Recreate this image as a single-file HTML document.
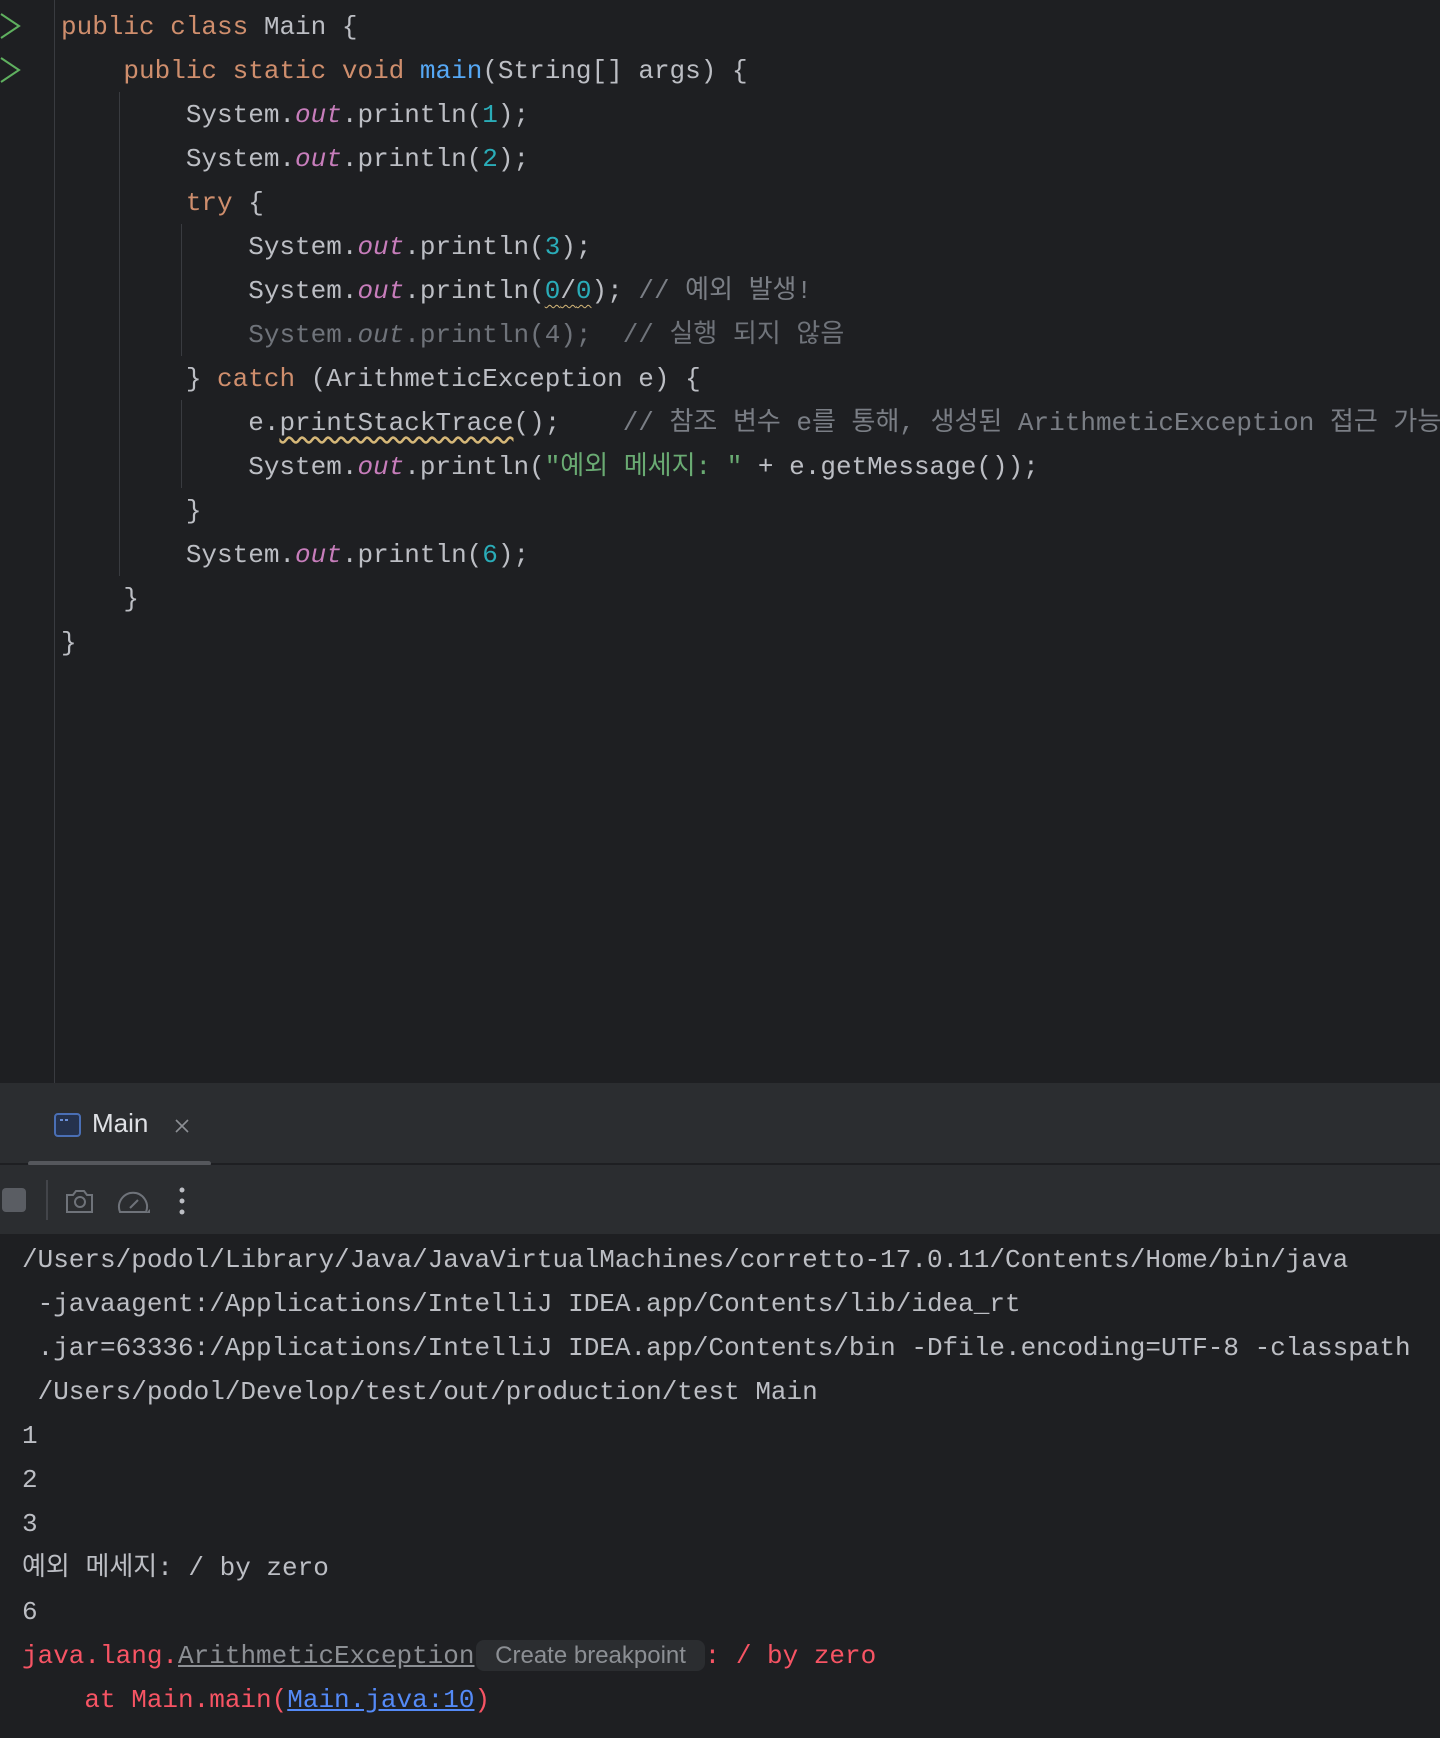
<!DOCTYPE html>
<html><head><meta charset="utf-8"><style>
html,body{margin:0;padding:0;}
body{width:1440px;height:1738px;background:#1e1f22;position:relative;overflow:hidden;font-family:"Liberation Mono","Noto Sans CJK KR",monospace;font-size:26px;color:#bcbec4;}
.code{position:absolute;left:61px;top:5px;white-space:pre;line-height:44px;}
.k{color:#cf8e6d}.f{color:#56a8f5}.o{color:#c77dbb;font-style:italic}.n{color:#2aacb8}.c{color:#7a7e85}.s{color:#6aab73}.dim{color:#6f737a}
.wav{text-decoration:underline wavy #d5b778;text-underline-offset:6px;text-decoration-thickness:1px}
.gut{position:absolute;left:54px;top:0;width:1px;height:1083px;background:#393b40}
.ig{position:absolute;width:1px;background:#393b40}
.tabs{position:absolute;left:0;top:1083px;width:1440px;height:80px;background:#2b2d30;border-bottom:2px solid #1e1f22}
.tb{position:absolute;left:0;top:1165px;width:1440px;height:69px;background:#2b2d30}
.con{position:absolute;left:22px;top:1238px;white-space:pre;line-height:44px;}
.r{color:#f75464}.lnk{color:#548af7;text-decoration:underline}
</style></head><body>
<div class="gut"></div>
<div class="ig" style="left:119px;top:92px;height:484px"></div>
<div class="ig" style="left:181px;top:224px;height:132px"></div>
<div class="ig" style="left:181px;top:400px;height:88px"></div>
<svg style="position:absolute;left:0;top:12px" width="22" height="80"><path d="M1 2 L19 14 L1 26" fill="none" stroke="#5fb05f" stroke-width="2"/><path d="M1 46 L19 58 L1 70" fill="none" stroke="#5fb05f" stroke-width="2"/></svg>
<div class="code"><span class="k">public class</span> Main {
    <span class="k">public static void</span> <span class="f">main</span>(String[] args) {
        System.<span class="o">out</span>.println(<span class="n">1</span>);
        System.<span class="o">out</span>.println(<span class="n">2</span>);
        <span class="k">try</span> {
            System.<span class="o">out</span>.println(<span class="n">3</span>);
            System.<span class="o">out</span>.println(<span class="wav"><span class="n">0</span>/<span class="n">0</span></span>); <span class="c">// 예외 발생!</span>
            <span class="dim">System.<i>out</i>.println(4);  // 실행 되지 않음</span>
        } <span class="k">catch</span> (ArithmeticException e) {
            e.<span style="text-decoration:underline wavy #d5b778;text-underline-offset:6px">printStackTrace</span>();    <span class="c">// 참조 변수 e를 통해, 생성된 ArithmeticException 접근 가능</span>
            System.<span class="o">out</span>.println(<span class="s">"예외 메세지: "</span> + e.getMessage());
        }
        System.<span class="o">out</span>.println(<span class="n">6</span>);
    }
}</div>
<div class="tabs">
<svg style="position:absolute;left:54px;top:30px" width="28" height="26"><rect x="1" y="1" width="25" height="22" rx="3" fill="#25324d" stroke="#4a6fb5" stroke-width="2"/><rect x="6" y="6" width="3" height="2" fill="#6b8fd6"/><rect x="11" y="6" width="3" height="2" fill="#6b8fd6"/></svg>
<div style="position:absolute;left:92px;top:25px;font-family:'Liberation Sans',sans-serif;font-size:26px;color:#dfe1e5">Main</div>
<svg style="position:absolute;left:174px;top:35px" width="16" height="16"><path d="M2 2L14 14M14 2L2 14" stroke="#8c8f94" stroke-width="1.6"/></svg>
<div style="position:absolute;left:28px;top:78px;width:183px;height:5px;border-radius:3px;background:#55575c"></div>
</div>
<div class="tb">
<div style="position:absolute;left:2px;top:23px;width:24px;height:24px;border-radius:4px;background:#5a5d63"></div>
<div style="position:absolute;left:46px;top:15px;width:2px;height:40px;background:#43454a"></div>
<svg style="position:absolute;left:64px;top:20px" width="32" height="32" fill="none" stroke="#6f737a" stroke-width="2"><path d="M3 10h6l3-4h8l3 4h5v17H3z"/><circle cx="16" cy="17" r="5"/></svg>
<svg style="position:absolute;left:116px;top:20px" width="36" height="34" fill="none" stroke="#6f737a" stroke-width="2"><path d="M4 27a14 14 0 1 1 26 0z"/><path d="M14 23l8-8"/><path d="M30 28l4-4v4z" fill="#6f737a" stroke="none"/></svg>
<svg style="position:absolute;left:178px;top:21px" width="8" height="30" fill="#bcbec4"><circle cx="4" cy="4" r="2.5"/><circle cx="4" cy="15" r="2.5"/><circle cx="4" cy="26" r="2.5"/></svg>
</div>
<div class="con">/Users/podol/Library/Java/JavaVirtualMachines/corretto-17.0.11/Contents/Home/bin/java
 -javaagent:/Applications/IntelliJ IDEA.app/Contents/lib/idea_rt
 .jar=63336:/Applications/IntelliJ IDEA.app/Contents/bin -Dfile.encoding=UTF-8 -classpath
 /Users/podol/Develop/test/out/production/test Main
1
2
3
예외 메세지: / by zero
6
<span class="r">java.lang.</span><span style="color:#8c8f94;text-decoration:underline">ArithmeticException</span><span style="font-family:'Liberation Sans',sans-serif;font-size:24px;color:#8c8f94;background:#2b2d30;border-radius:8px;padding:2px 12px;margin-left:2px"> Create breakpoint </span><span class="r">: / by zero</span>
<span class="r">    at Main.main(</span><span class="lnk">Main.java:10</span><span class="r">)</span></div>
</body></html>
